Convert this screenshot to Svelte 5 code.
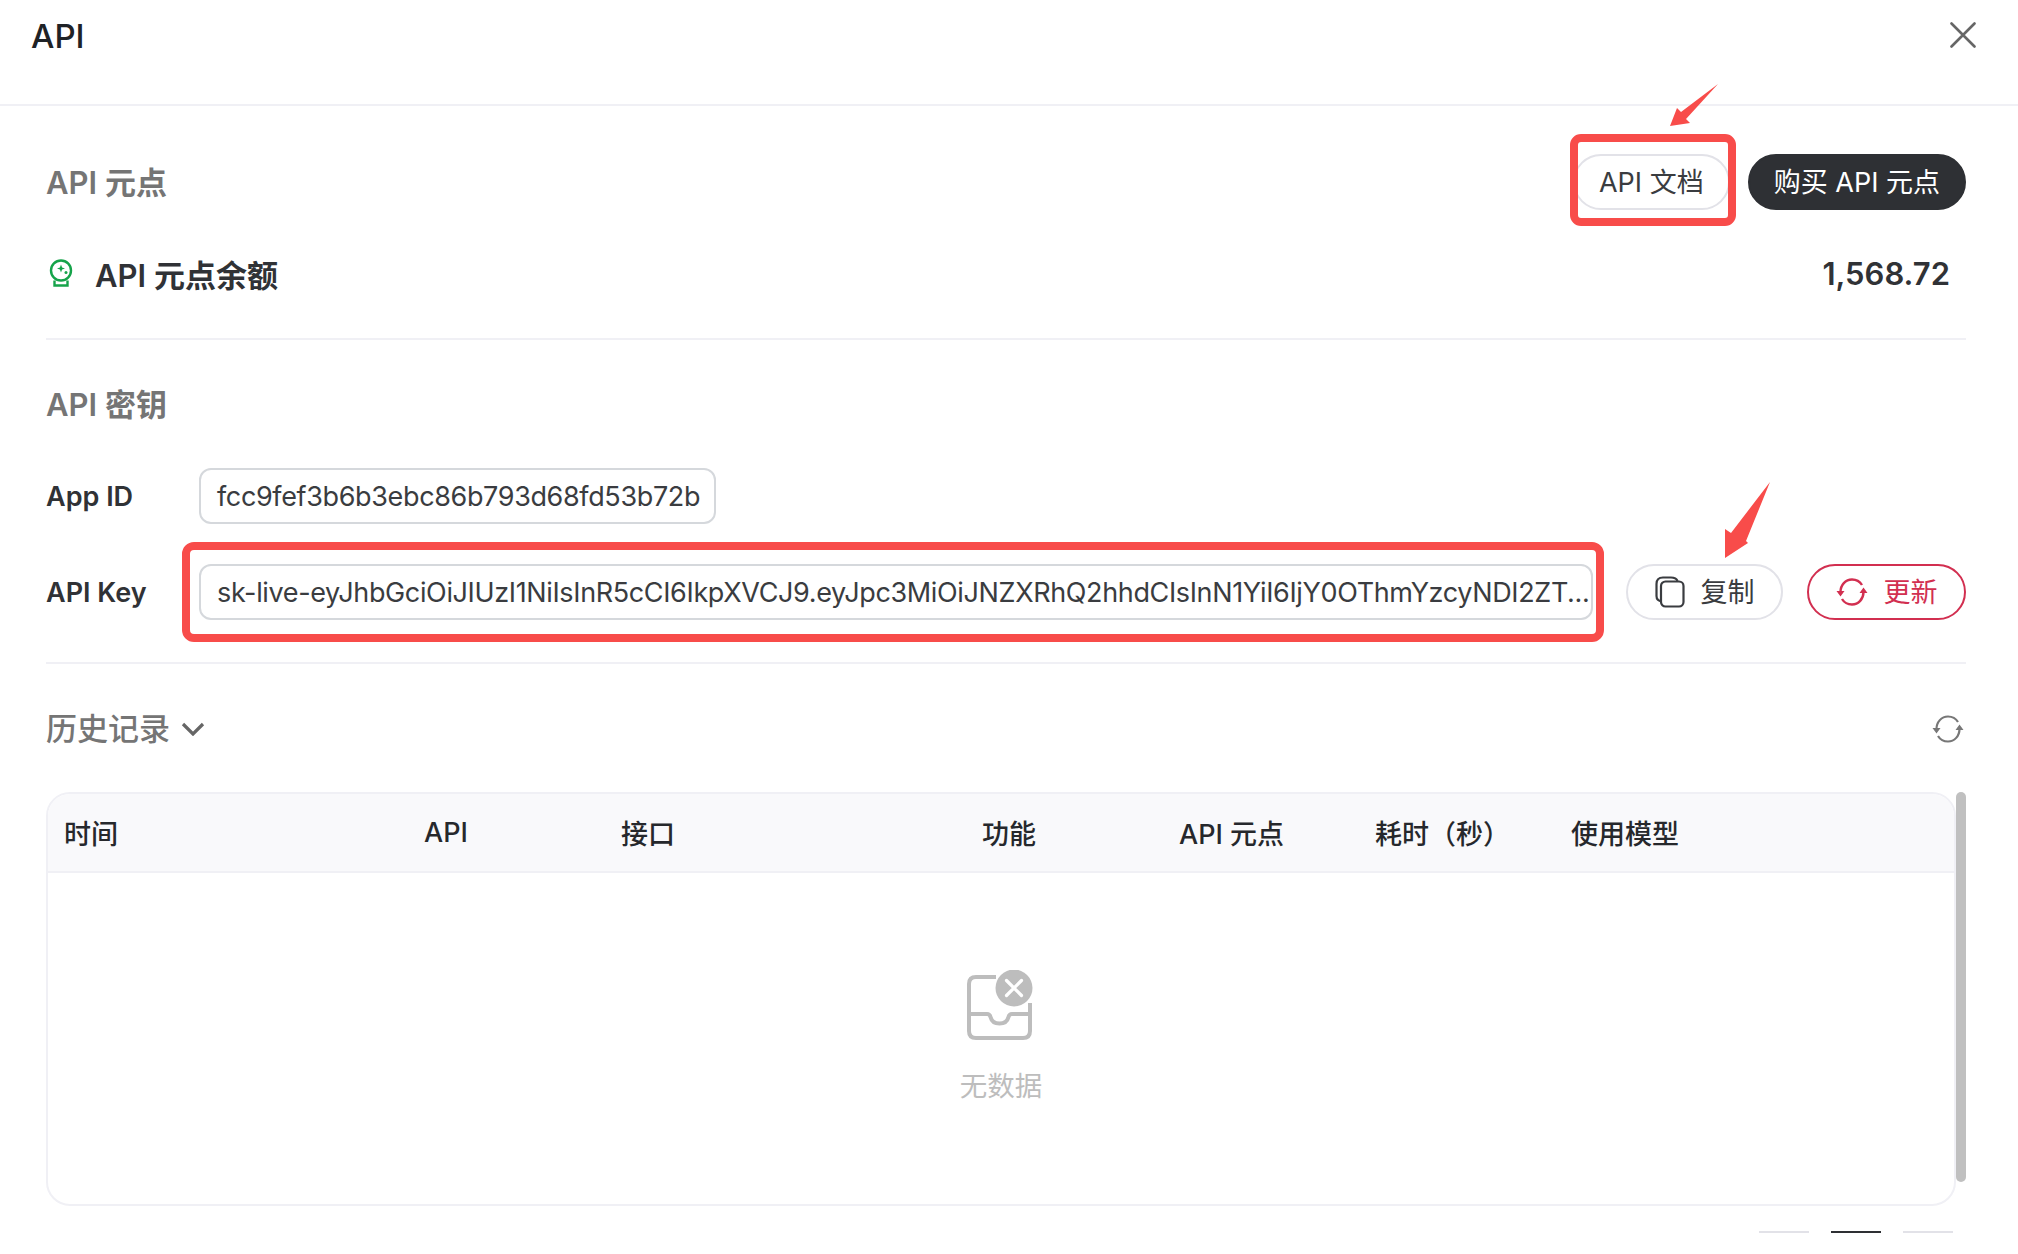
<script>
	const columns = [
		{ label: '时间', width: 360 },
		{ label: 'API', width: 197 },
		{ label: '接口', width: 361 },
		{ label: '功能', width: 197 },
		{ label: 'API 元点', width: 196 },
		{ label: '耗时（秒）', width: 196 },
		{ label: '使用模型', width: 300 }
	];
	const appId = 'fcc9fef3b6b3ebc86b793d68fd53b72b';
	const apiKey = 'sk-live-eyJhbGciOiJIUzI1NiIsInR5cCI6IkpXVCJ9.eyJpc3MiOiJNZXRhQ2hhdCIsInN1YiI6IjY0OThmYzcyNDI2ZT...';
</script>

<div class="page">
	<header class="top">
		<h1>API</h1>
		<button class="close" aria-label="关闭">
			<svg viewBox="0 0 26 26" width="26" height="26">
				<path d="M1.500 1.500L24.500 24.500M24.500 1.500L1.500 24.500" fill="none" stroke="#666" stroke-width="2.600" stroke-linecap="round" />
			</svg>
		</button>
	</header>

	<main class="body">
		<section class="credits">
			<div class="title-row">
				<h2>API 元点</h2>
				<div class="actions">
					<button class="pill">API 文档</button>
					<button class="pill dark">购买 API 元点</button>
				</div>
			</div>
			<div class="balance">
				<div class="balance-label">
					<svg class="ball" viewBox="0 0 24 28" width="24" height="28">
						<circle cx="12" cy="11.500" r="10" fill="none" stroke="#16a34a" stroke-width="2.400" />
						<path d="M5.500 21.500V26.500H18.500V21.500" fill="none" stroke="#16a34a" stroke-width="2.400" />
						<path d="M12 5.500l1.100 2.900 2.900 1.100-2.900 1.100L12 13.500l-1.100-2.900L8 9.500l2.900-1.100z" fill="#16a34a" />
						<circle cx="17" cy="13.500" r="1.500" fill="#16a34a" />
					</svg>
					<span>API 元点余额</span>
				</div>
				<span class="amount">1,568.72</span>
			</div>
		</section>

		<section class="keys">
			<h2>API 密钥</h2>
			<div class="key-row first">
				<span class="key-label">App ID</span>
				<div class="field short">{appId}</div>
			</div>
			<div class="key-row">
				<span class="key-label">API Key</span>
				<div class="field long">{apiKey}</div>
				<button class="pill copy">
					<svg viewBox="0 0 30 32" width="30" height="32">
						<path d="M7 25.500C3.500 25 1.500 23.500 1.500 20V8C1.500 3.500 3.500 1.500 8 1.500h8c3.500 0 5.500 1 6.500 3.500" fill="none" stroke="#3a3c40" stroke-width="2.200" />
						<rect x="6" y="5.500" width="22.500" height="25" rx="4.500" fill="#fff" stroke="#3a3c40" stroke-width="2.200" />
					</svg>
					<span>复制</span>
				</button>
				<button class="pill renew">
					<svg viewBox="0 0 32 30" width="32" height="30">
						<path d="M4.500 15C4.500 8 9.500 2.500 16 2.500c4.500 0 8 2.200 10 5.500M27.500 15c0 7-5 12.500-11.500 12.500-4.500 0-8-2.200-10-5.500" fill="none" stroke="currentColor" stroke-width="2.400" />
						<path d="M0.500 14H8.500L4.500 19.500zM23.500 16H31.500L27.500 10.500z" fill="currentColor" />
					</svg>
					<span>更新</span>
				</button>
			</div>
		</section>

		<section class="history">
			<div class="history-head">
				<button class="history-toggle">
					<span>历史记录</span>
					<svg viewBox="0 0 24 14" width="24" height="14">
						<path d="M2 2L12 12L22 2" fill="none" stroke="#666" stroke-width="3.200" />
					</svg>
				</button>
				<button class="reload" aria-label="刷新">
					<svg viewBox="0 0 32 30" width="32" height="30">
						<path d="M4.500 15C4.500 8 9.500 2.500 16 2.500c4.500 0 8 2.200 10 5.500M27.500 15c0 7-5 12.500-11.500 12.500-4.500 0-8-2.200-10-5.500" fill="none" stroke="#777" stroke-width="2.200" />
						<path d="M0.500 14H8.500L4.500 19.500zM23.500 16H31.500L27.500 10.500z" fill="#777" />
					</svg>
				</button>
			</div>

			<div class="table-wrap">
				<div class="table">
					<div class="thead">
						{#each columns as col}
							<div class="th" style="width: {col.width}px">{col.label}</div>
						{/each}
					</div>
					<div class="empty">
						<svg viewBox="0 0 68 74" width="68" height="74">
							<path d="M29 7H9C4.500 7 2 9.500 2 14V61c0 4.500 2.500 7 7 7H56c4.500 0 7-2.500 7-7V33" fill="none" stroke="#bdbdbd" stroke-width="4" />
							<path d="M2 44H20c2 0 3 1 3.500 3 1 4 4.500 6.500 9 6.500s8-2.500 9-6.500c.5-2 1.500-3 3.500-3H63" fill="none" stroke="#bdbdbd" stroke-width="4" />
							<circle cx="47" cy="18" r="18.500" fill="#bdbdbd" />
							<path d="M39.500 10.500L54.500 25.500M54.500 10.500L39.500 25.500" stroke="#fff" stroke-width="3.200" stroke-linecap="round" />
						</svg>
						<span>无数据</span>
					</div>
				</div>
				<div class="scrollbar"></div>
			</div>

			<div class="pager">
				<span class="page-btn"></span>
				<span class="page-btn current"></span>
				<span class="page-btn"></span>
			</div>
		</section>
	</main>

	<!-- red markup drawn on top of the screenshot -->
	<svg class="markup" viewBox="0 0 2018 1254" width="2018" height="1254">
		<rect x="1574" y="138" width="158" height="84" rx="7" fill="none" stroke="#f84c4a" stroke-width="8" />
		<rect x="186" y="546" width="1414" height="92" rx="8" fill="none" stroke="#f84c4a" stroke-width="8" />
		<polygon points="1718,84 1686,119 1690,123 1670,126 1677,108 1681,112" fill="#f84c4a" />
		<polygon points="1770,482 1746,541 1748,543 1725,558 1725,529 1731,533" fill="#f84c4a" />
	</svg>
</div>

<style>
	:global(body) {
		margin: 0;
		background: #fff;
	}

	.page {
		position: relative;
		width: 2018px;
		height: 1254px;
		overflow: hidden;
		background: #fff;
		font-family: Inter, 'Noto Sans CJK SC', sans-serif;
		color: #303236;
	}

	button {
		font: inherit;
		background: none;
		border: none;
		padding: 0;
		color: inherit;
	}

	.top {
		height: 104px;
		box-sizing: content-box;
		display: flex;
		justify-content: space-between;
		align-items: flex-start;
		padding: 0 31px;
		border-bottom: 2px solid #f0f0f5;
	}

	h1 {
		margin: 16px 0 0;
		font-size: 33px;
		line-height: 40px;
		font-weight: 500;
		color: #1f2226;
	}

	.close {
		margin-top: 22px;
		margin-right: 11px;
		display: flex;
	}

	.body {
		padding: 0 52px 0 46px;
	}

	h2 {
		margin: 0;
		font-size: 31px;
		line-height: 40px;
		font-weight: 600;
		color: #757575;
	}

	.title-row {
		display: flex;
		justify-content: space-between;
		align-items: center;
		padding-top: 48px;
	}

	.title-row h2 {
		padding-top: 2px;
	}

	.actions {
		display: flex;
		gap: 18px;
	}

	.pill {
		height: 56px;
		box-sizing: border-box;
		display: inline-flex;
		align-items: center;
		justify-content: center;
		gap: 16px;
		padding: 0 24px;
		border: 2px solid #e2e2e8;
		border-radius: 28px;
		background: #fff;
		font-size: 27px;
		line-height: 1;
		color: #3a3c40;
	}

	.pill.dark {
		background: #2e3034;
		border-color: #2e3034;
		color: #fff;
	}

	.balance {
		display: flex;
		justify-content: space-between;
		align-items: center;
		margin-top: 41px;
		height: 44px;
		padding: 0 16px 0 3px;
	}

	.balance-label {
		display: flex;
		align-items: center;
		gap: 22px;
		font-size: 31px;
		font-weight: 600;
	}

	.amount {
		font-size: 31px;
		font-weight: 600;
	}

	.credits {
		padding-bottom: 43px;
		border-bottom: 2px solid #f0f0f5;
	}

	.keys {
		padding-top: 45px;
		padding-bottom: 42px;
		border-bottom: 2px solid #f0f0f5;
	}

	.key-row {
		display: flex;
		align-items: center;
		margin-top: 40px;
	}

	.key-row.first {
		margin-top: 43px;
	}

	.key-label {
		width: 153px;
		flex: none;
		font-size: 27px;
		font-weight: 600;
	}

	.field {
		height: 56px;
		box-sizing: border-box;
		display: flex;
		align-items: center;
		padding: 0 16px;
		border: 2px solid #d5d8dc;
		border-radius: 12px;
		font-size: 27px;
		letter-spacing: -0.36px;
		white-space: nowrap;
		color: #3a3c40;
	}

	.field.short {
		width: 517px;
	}

	.field.long {
		width: 1394px;
		flex: none;
	}

	.copy {
		margin-left: 33px;
		width: 157px;
		flex: none;
		padding: 0;
	}

	.renew {
		margin-left: 24px;
		width: 159px;
		flex: none;
		padding: 0;
		border-color: #d22f50;
		color: #d22f50;
	}

	.history-head {
		display: flex;
		justify-content: space-between;
		align-items: center;
		padding-top: 43px;
		padding-right: 2px;
	}

	.history-toggle {
		display: flex;
		align-items: center;
		gap: 11px;
		font-size: 31px;
		line-height: 44px;
		font-weight: 500;
		color: #757575;
	}

	.reload {
		display: flex;
	}

	.table-wrap {
		display: flex;
		margin-top: 41px;
	}

	.table {
		width: 1910px;
		height: 414px;
		box-sizing: border-box;
		border: 2px solid #f0f0f5;
		border-radius: 24px;
		overflow: hidden;
	}

	.thead {
		display: flex;
		align-items: center;
		height: 77px;
		padding-left: 16px;
		background: #f9f9fb;
		border-bottom: 2px solid #f0f0f5;
		font-size: 27px;
		font-weight: 500;
		color: #26282c;
	}

	.th {
		flex: none;
	}

	.empty {
		display: flex;
		flex-direction: column;
		align-items: center;
		gap: 24px;
		padding-top: 97px;
		font-size: 27.500px;
		line-height: 36px;
		color: #bdbdbd;
	}

	.scrollbar {
		width: 10px;
		height: 390px;
		background: #c0c0c0;
		border-radius: 5px;
	}

	.pager {
		display: flex;
		gap: 22px;
		justify-content: flex-end;
		padding-right: 13px;
		margin-top: 25px;
		height: 2px;
		overflow: hidden;
	}

	.page-btn {
		width: 50px;
		height: 2px;
		background: #e2e2e8;
	}

	.page-btn.current {
		background: #2e3034;
	}

	.markup {
		position: absolute;
		left: 0;
		top: 0;
		pointer-events: none;
	}
</style>
